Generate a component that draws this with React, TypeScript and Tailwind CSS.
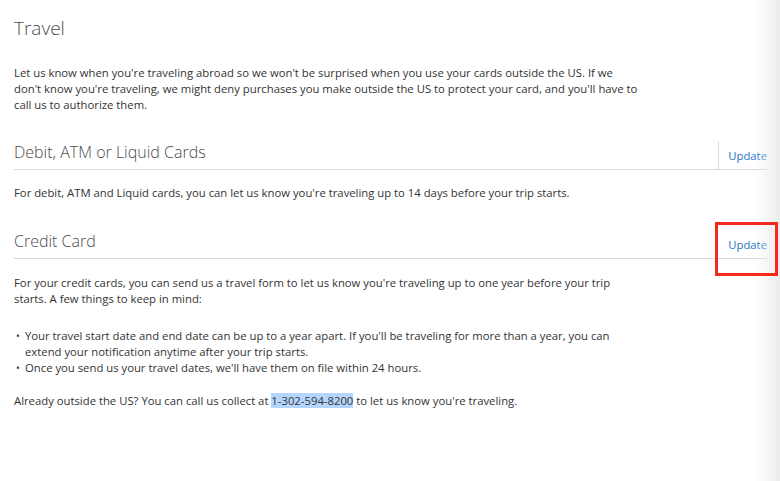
import React from 'react';

const SectionHeader: React.FC<{ title: string; divider?: boolean; boxed?: boolean }> = ({ title, divider, boxed }) => (
  <div className="flex items-stretch border-b border-[#d9d9d9] h-[29px]">
    <h2 className="flex-1 self-end pb-[7px] text-[16px] leading-[20px] font-light text-[#4d4d4d]">{title}</h2>
    <div className={`relative flex items-end pb-[5px] ${divider ? 'border-l border-[#d9d9d9] pl-[9px]' : 'pl-[10px]'}`}>
      <a className="text-[11.3px] leading-[16px] text-[#1f74c9] cursor-pointer">Update</a>
      {boxed && (
        <span className="absolute z-10 left-[-3px] right-[-11px] top-[-8px] bottom-[-18px] border-[3px] border-[#f42a1e]" />
      )}
    </div>
  </div>
);

export default function App() {
  return (
    <div className="relative w-[780px] h-[481px] bg-white overflow-hidden" style={{ fontFamily: '"Open Sans", "Liberation Sans", sans-serif' }}>
      <div className="pl-[14px] pr-[13px] pt-[14px] text-[#333333]">
        <h1 className="text-[19px] leading-[28px] font-light text-[#4d4d4d]">Travel</h1>
        <p className="mt-[23px] text-[11.3px] leading-[16px] max-w-[626px]">
          Let us know when you're traveling abroad so we won't be surprised when you use your cards outside the US. If we don't know you're traveling, we might deny purchases you make outside the US to protect your card, and you'll have to call us to authorize them.
        </p>

        <div className="mt-[28px]">
          <SectionHeader title="Debit, ATM or Liquid Cards" divider />
        </div>
        <p className="mt-[15px] text-[11.3px] leading-[16px]">
          For debit, ATM and Liquid cards, you can let us know you're traveling up to 14 days before your trip starts.
        </p>

        <div className="mt-[29px]">
          <SectionHeader title="Credit Card" boxed />
        </div>
        <p className="mt-[16px] text-[11.3px] leading-[16px] max-w-[605px]">
          For your credit cards, you can send us a travel form to let us know you're traveling up to one year before your trip starts. A few things to keep in mind:
        </p>
        <ul className="mt-[21px] text-[11.3px] leading-[16px] max-w-[605px]">
          <li className="flex">
            <span className="w-[11px] shrink-0 pl-[2px] text-[10px]">•</span>
            <span>Your travel start date and end date can be up to a year apart. If you'll be traveling for more than a year, you can extend your notification anytime after your trip starts.</span>
          </li>
          <li className="flex">
            <span className="w-[11px] shrink-0 pl-[2px] text-[10px]">•</span>
            <span>Once you send us your travel dates, we'll have them on file within 24 hours.</span>
          </li>
        </ul>
        <p className="mt-[17px] text-[11.3px] leading-[16px]">
          Already outside the US? You can call us collect at <span className="bg-[#b4d5fe]">1-302-594-8200</span> to let us know you're traveling.
        </p>
      </div>
      <div className="absolute top-0 right-0 h-full w-[24px] bg-gradient-to-r from-white/0 to-[#ececec]" />
    </div>
  );
}
